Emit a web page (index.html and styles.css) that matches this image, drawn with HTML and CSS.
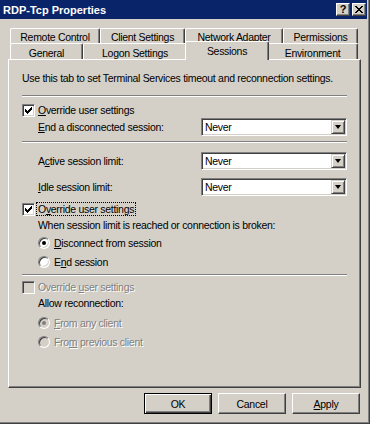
FILE: index.html
```html
<!DOCTYPE html>
<html lang="en">
<head>
    <meta charset="UTF-8">
    <title>RDP-Tcp Properties</title>
    <link rel="stylesheet" href="styles.css">
</head>
<body>
    <div class="window">
        <div class="titlebar">
            <span class="title">RDP-Tcp Properties</span>
            <div class="caption-btns">
                <span class="cap-btn">?</span>
                <span class="cap-btn">
                    <svg width="8" height="7" viewBox="0 0 8 7" shape-rendering="crispEdges"><path d="M0 0h2v1h-2zM6 0h2v1h-2zM1 1h2v1h-2zM5 1h2v1h-2zM2 2h4v1h-4zM3 3h2v1h-2zM2 4h4v1h-4zM1 5h2v1h-2zM5 5h2v1h-2zM0 6h2v1h-2zM6 6h2v1h-2z" fill="#000"/></svg>
                </span>
            </div>
        </div>

        <div class="tabs">
            <div class="tab-row">
                <div class="tab w-remote">Remote Control</div>
                <div class="tab w-client">Client Settings</div>
                <div class="tab w-network">Network Adapter</div>
                <div class="tab w-perm">Permissions</div>
            </div>
            <div class="tab-row front">
                <div class="tab w-general">General</div>
                <div class="tab w-logon">Logon Settings</div>
                <div class="tab w-sessions selected">Sessions</div>
                <div class="tab w-env">Environment</div>
            </div>
        </div>

        <div class="panel">
            <div class="row intro">Use this tab to set Terminal Services timeout and reconnection settings.</div>
            <div class="sep m-sep1"></div>

            <div class="row check-row m-check1">
                <span class="checkbox"><svg width="7" height="7" viewBox="0 0 7 7" shape-rendering="crispEdges"><path d="M6 0h1v1h-1zM5 1h2v1h-2zM0 2h1v1h-1zM4 2h3v1h-3zM0 3h2v1h-2zM3 3h3v1h-3zM0 4h5v1h-5zM1 5h3v1h-3zM2 6h1v1h-1z" fill="#000"/></svg></span>
                <span class="lbl"><u>O</u>verride user settings</span>
            </div>
            <div class="field-row m-end">
                <span class="field-label"><u>E</u>nd a disconnected session:</span>
                <div class="combo"><span class="combo-text">Never</span><span class="combo-btn"><span class="arrow"></span></span></div>
            </div>

            <div class="sep m-sep2"></div>

            <div class="field-row m-active">
                <span class="field-label">A<u>c</u>tive session limit:</span>
                <div class="combo"><span class="combo-text">Never</span><span class="combo-btn"><span class="arrow"></span></span></div>
            </div>
            <div class="field-row m-idle">
                <span class="field-label"><u>I</u>dle session limit:</span>
                <div class="combo"><span class="combo-text">Never</span><span class="combo-btn"><span class="arrow"></span></span></div>
            </div>

            <div class="row check-row m-check2">
                <span class="checkbox"><svg width="7" height="7" viewBox="0 0 7 7" shape-rendering="crispEdges"><path d="M6 0h1v1h-1zM5 1h2v1h-2zM0 2h1v1h-1zM4 2h3v1h-3zM0 3h2v1h-2zM3 3h3v1h-3zM0 4h5v1h-5zM1 5h3v1h-3zM2 6h1v1h-1z" fill="#000"/></svg></span>
                <span class="lbl focus">O<u>v</u>erride user settings</span>
            </div>
            <div class="row indent m-when">When session limit is reached or connection is broken:</div>
            <div class="row radio-row m-radio1">
                <span class="radio"><span class="dot"></span></span>
                <span class="lbl"><u>D</u>isconnect from session</span>
            </div>
            <div class="row radio-row m-radio2">
                <span class="radio"></span>
                <span class="lbl">E<u>n</u>d session</span>
            </div>

            <div class="sep m-sep3"></div>

            <div class="row check-row disabled m-check3">
                <span class="checkbox"></span>
                <span class="lbl">Override <u>u</u>ser settings</span>
            </div>
            <div class="row indent m-allow">Allow reconnection:</div>
            <div class="row radio-row disabled m-radio3">
                <span class="radio"><span class="dot"></span></span>
                <span class="lbl"><u>F</u>rom any client</span>
            </div>
            <div class="row radio-row disabled m-radio4">
                <span class="radio"></span>
                <span class="lbl">Fro<u>m</u> previous client</span>
            </div>
        </div>

        <div class="buttons">
            <span class="btn default">OK</span>
            <span class="btn">Cancel</span>
            <span class="btn"><u>A</u>pply</span>
        </div>
    </div>
</body>
</html>
```

FILE: styles.css
```css
body {
    margin: 0;
    background-color: #d4d0c8;
    font-family: 'Liberation Sans', Arial, sans-serif;
    font-size: 10.5px;
    letter-spacing: -0.3px;
    white-space: nowrap;
    color: #000;
}
.window {
    box-sizing: border-box;
    width: 370px;
    height: 424px;
    padding-right: 2px;
    background-color: #d4d0c8;
    border-right: 1px solid #404040;
    border-bottom: 1px solid #404040;
    box-shadow: inset -1px -1px #808080; /* classic 3D edge */
}
.titlebar {
    height: 19px;
    background-color: #0a246a;
    display: flex;
    align-items: center;
    justify-content: space-between;
}
.title {
    color: #fff;
    font-weight: bold;
    font-size: 11px;
    letter-spacing: 0;
    padding-left: 3px;
}
.caption-btns {
    display: flex;
    gap: 2px;
    margin-right: 1px;
}
.cap-btn {
    box-sizing: border-box;
    width: 14px;
    height: 13px;
    background-color: #d4d0c8;
    border: 1px solid;
    border-color: #fff #404040 #404040 #fff;
    box-shadow: inset -1px -1px #808080;
    display: flex;
    align-items: center;
    justify-content: center;
    font-weight: bold;
    font-size: 11px;
    line-height: 1;
}

/* tab strip */
.tabs {
    margin: 9px 0 0 10px;
    width: 348px;
}
.tab-row {
    display: flex;
    height: 15px;
}
.tab-row.front {
    height: 16px;
}
.tab {
    box-sizing: border-box;
    height: 15px;
    border-top: 1px solid #fff;
    border-left: 1px solid #fff;
    border-right: 1px solid #404040;
    box-shadow: inset -1px 0 #808080;
    border-radius: 2px 2px 0 0;
    background-color: #d4d0c8;
    text-align: center;
    line-height: 16px;
}
.front .tab {
    height: 16px;
    line-height: 18px;
}
.front .tab.selected {
    position: relative;
    z-index: 1;
    height: 19px;
    margin: -2px -2px 0;
    line-height: 19px;
}
.w-remote { width: 90px; }
.w-client { width: 85px; }
.w-network { width: 98px; }
.w-perm { width: 75px; }
.w-general { width: 73px; }
.w-logon { width: 104px; }
.w-sessions { width: 84px; }
.w-env { width: 91px; }

/* panel */
.panel {
    box-sizing: border-box;
    width: 353px;
    height: 329px;
    margin-left: 8px;
    padding: 11px 13px 0;
    border-top: 1px solid #fff;
    border-left: 1px solid #fff;
    border-right: 1px solid #404040;
    border-bottom: 1px solid #404040;
    box-shadow: inset -1px -1px #808080;
}
.row {
    height: 14px;
    display: flex;
    align-items: center;
}
.indent {
    padding-left: 16px;
}
.sep {
    box-sizing: border-box;
    height: 2px;
    border-top: 1px solid #808080;
    border-bottom: 1px solid #fff;
}
.check-row .checkbox {
    margin-right: 3px;
}
.checkbox {
    box-sizing: border-box;
    width: 13px;
    height: 13px;
    background-color: #fff;
    border: 1px solid;
    border-color: #808080 #fff #fff #808080;
    box-shadow: inset 1px 1px #404040, inset -1px -1px #d4d0c8;
    display: flex;
    align-items: center;
    justify-content: center;
}
.radio-row {
    padding-left: 16px;
}
.radio {
    box-sizing: border-box;
    width: 12px;
    height: 12px;
    margin-right: 4px;
    border-radius: 50%;
    background-color: #fff;
    border: 1px solid;
    border-color: #808080 #fff #fff #808080;
    box-shadow: inset 1px 1px #404040, inset -1px -1px #d4d0c8;
    display: flex;
    align-items: center;
    justify-content: center;
}
.dot {
    width: 4px;
    height: 4px;
    border-radius: 50%;
    background-color: #000;
}
.focus {
    outline: 1px dotted #000;
    outline-offset: 0;
    padding: 0 1px;
    margin-left: -1px;
}
.disabled .lbl {
    color: #808080;
    text-shadow: 1px 1px #fff;
}
.disabled .checkbox,
.disabled .radio {
    background-color: #d4d0c8;
}
.disabled .dot {
    background-color: #808080;
}

.field-row {
    display: flex;
    align-items: center;
    justify-content: space-between;
    height: 18px;
    padding-left: 16px;
}
.combo {
    box-sizing: border-box;
    width: 146px;
    height: 18px;
    background-color: #fff;
    border: 1px solid;
    border-color: #808080 #fff #fff #808080;
    box-shadow: inset 1px 1px #404040, inset -1px -1px #d4d0c8;
    display: flex;
    align-items: center;
    justify-content: space-between;
    padding: 1px 1px 1px 3px;
}
.combo-btn {
    box-sizing: border-box;
    width: 14px;
    height: 14px;
    background-color: #d4d0c8;
    border: 1px solid;
    border-color: #d4d0c8 #404040 #404040 #d4d0c8;
    box-shadow: inset 1px 1px #fff, inset -1px -1px #808080;
    display: flex;
    align-items: center;
    justify-content: center;
}
.arrow {
    width: 0;
    height: 0;
    border-left: 3.5px solid transparent;
    border-right: 3.5px solid transparent;
    border-top: 4px solid #000;
}

/* vertical rhythm of the panel rows */
.m-sep1 { margin-top: 10px; }
.m-check1 { margin-top: 6px; }
.m-end { margin-top: 1px; }
.m-sep2 { margin-top: 5px; }
.m-active { margin-top: 9px; }
.m-idle { margin-top: 8px; }
.m-check2 { margin-top: 6px; }
.m-when { margin-top: 2px; }
.m-radio1 { margin-top: 4px; }
.m-radio2 { margin-top: 5px; }
.m-sep3 { margin-top: 5px; }
.m-check3 { margin-top: 4px; }
.m-allow { margin-top: 2px; }
.m-radio3 { margin-top: 6px; }
.m-radio4 { margin-top: 5px; }

/* dialog buttons */
.buttons {
    display: flex;
    justify-content: flex-end;
    gap: 6px;
    margin: 5px 7px 0 0;
}
.btn {
    box-sizing: border-box;
    width: 68px;
    height: 21px;
    border: 1px solid;
    border-color: #fff #404040 #404040 #fff;
    box-shadow: inset -1px -1px #808080;
    display: flex;
    align-items: center;
    justify-content: center;
}
.btn.default {
    border-color: #000;
    box-shadow: inset 1px 1px #fff, inset -1px -1px #404040, inset -2px -2px #808080;
}
```
